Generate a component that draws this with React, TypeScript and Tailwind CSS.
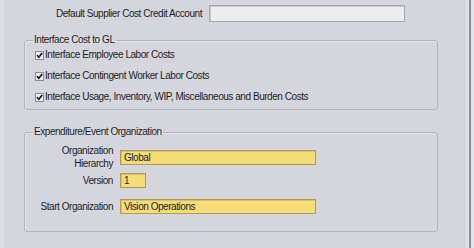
import React from 'react';

function Check() {
  return (
    <svg width="9" height="9" viewBox="0 0 9 9" className="shrink-0">
      <rect x="0.5" y="0.5" width="8" height="8" fill="#ececf0" stroke="#8c8c94" />
      <path d="M2 4.2 L3.8 6.3 L7.2 2" fill="none" stroke="#111" strokeWidth="1.6" />
    </svg>
  );
}

const checks = [
  'Interface Employee Labor Costs',
  'Interface Contingent Worker Labor Costs',
  'Interface Usage, Inventory, WIP, Miscellaneous and Burden Costs',
];

const yellowField = 'flex h-[15px] items-center border border-[#b49a58] bg-[#f4dc78] px-[3px] shadow-[inset_1px_1px_0_#d8c070]';

export default function App() {
  return (
    <div
      className="flex h-[248px] w-[474px] overflow-hidden bg-[#d5d5dd] text-[10px] tracking-[-0.45px] text-[#1e1e24]"
      style={{ fontFamily: '"Liberation Sans", Arial, sans-serif' }}
    >
      {/* left light strip */}
      <div className="w-[4px] bg-[#dcdde4]" />

      {/* form body */}
      <div className="flex w-[462px] flex-col">
        {/* supplier account row */}
        <div className="mt-[5px] flex h-[17px] items-center">
          <div className="w-[205px] whitespace-nowrap pr-[7px] text-right">Default Supplier Cost Credit Account</div>
          <div className="h-[17px] w-[196px] border border-[#a8a8b0] bg-[#ececec] shadow-[inset_1px_1px_0_#c8c8cc]" />
        </div>

        {/* Interface Cost to GL */}
        <fieldset className="ml-[20px] mt-[12px] h-[76px] w-[414px] rounded-[3px] border border-[#b2b3bd] px-[8px] pb-0 shadow-[inset_1px_1px_0_#e4e4ea]">
          <legend className="px-[1px] leading-[12px]">Interface Cost to GL</legend>
          <div className="mt-[3px] flex flex-col gap-[9px] pl-[2px]">
            {checks.map((c) => (
              <div key={c} className="flex h-[12px] items-center gap-[1px]">
                <Check />
                <span className="whitespace-nowrap leading-[12px]">{c}</span>
              </div>
            ))}
          </div>
        </fieldset>

        {/* Expenditure/Event Organization */}
        <fieldset className="ml-[20px] mt-[16px] h-[106px] w-[414px] rounded-[3px] border border-[#b2b3bd] px-[8px] shadow-[inset_1px_1px_0_#e4e4ea]">
          <legend className="px-[1px] leading-[12px]">Expenditure/Event Organization</legend>

          <div className="mt-[6px] flex items-center gap-[7px]">
            <div className="w-[80px] text-right leading-[13px]">
              Organization
              <br />
              Hierarchy
            </div>
            <div className={`${yellowField} w-[196px]`}>Global</div>
          </div>

          <div className="mt-[3px] flex items-center gap-[7px]">
            <div className="w-[80px] text-right">Version</div>
            <div className={`${yellowField} w-[26px]`}>1</div>
          </div>

          <div className="mt-[11px] flex items-center gap-[7px]">
            <div className="w-[80px] whitespace-nowrap text-right">Start Organization</div>
            <div className={`${yellowField} w-[196px]`}>Vision Operations</div>
          </div>
        </fieldset>
      </div>

      {/* right window edge */}
      <div className="w-[3px] bg-[#e0e1e8]" />
      <div className="w-[2px] bg-[#8a8c98]" />
      <div className="w-[3px] bg-[#e4e5ec]" />
    </div>
  );
}
